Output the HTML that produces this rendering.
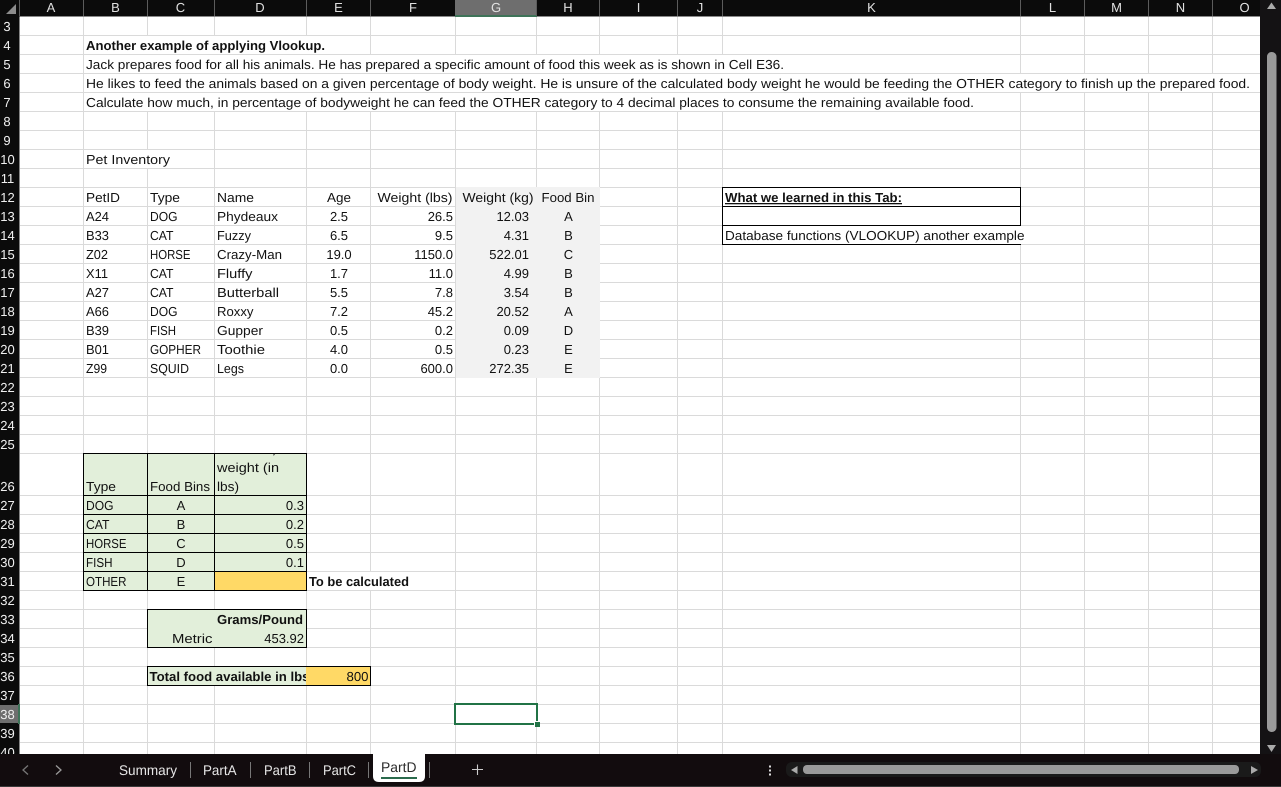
<!DOCTYPE html>
<html><head><meta charset="utf-8"><title>PartD</title>
<style>
html,body{margin:0;padding:0;background:#fff;width:1281px;height:787px;overflow:hidden}
svg{display:block;font-family:"Liberation Sans",sans-serif;font-size:13px;text-rendering:geometricPrecision}
.g line{stroke:#dadada;stroke-width:1}
.t text{fill:#111}
.b{font-weight:700}
.h text{fill:#e0e0e0;text-anchor:middle;font-size:13px}
.r text{fill:#f0f0f0;text-anchor:middle;font-size:13px}
.k line{stroke:#000;stroke-width:1}
.c{text-anchor:middle}
.e{text-anchor:end}
.tb text{fill:#e6e6e6;font-size:14px}
.tb line{stroke:#777;stroke-width:1}
</style></head><body>
<svg width="1281" height="787" viewBox="0 0 1281 787" xmlns="http://www.w3.org/2000/svg">
<rect width="1281" height="787" fill="#fff"/>
<g class="g">
<line x1="83.5" y1="16" x2="83.5" y2="754"/><line x1="147.5" y1="16" x2="147.5" y2="754"/><line x1="214.5" y1="16" x2="214.5" y2="754"/><line x1="306.5" y1="16" x2="306.5" y2="754"/><line x1="370.5" y1="16" x2="370.5" y2="754"/><line x1="455.5" y1="16" x2="455.5" y2="754"/><line x1="536.5" y1="16" x2="536.5" y2="754"/><line x1="599.5" y1="16" x2="599.5" y2="754"/><line x1="677.5" y1="16" x2="677.5" y2="754"/><line x1="722.5" y1="16" x2="722.5" y2="754"/><line x1="1020.5" y1="16" x2="1020.5" y2="754"/><line x1="1084.5" y1="16" x2="1084.5" y2="754"/><line x1="1148.5" y1="16" x2="1148.5" y2="754"/><line x1="1212.5" y1="16" x2="1212.5" y2="754"/>
<line x1="20" y1="35.5" x2="1260" y2="35.5"/><line x1="20" y1="54.5" x2="1260" y2="54.5"/><line x1="20" y1="73.5" x2="1260" y2="73.5"/><line x1="20" y1="92.5" x2="1260" y2="92.5"/><line x1="20" y1="111.5" x2="1260" y2="111.5"/><line x1="20" y1="130.5" x2="1260" y2="130.5"/><line x1="20" y1="149.5" x2="1260" y2="149.5"/><line x1="20" y1="168.5" x2="1260" y2="168.5"/><line x1="20" y1="187.5" x2="1260" y2="187.5"/><line x1="20" y1="206.5" x2="1260" y2="206.5"/><line x1="20" y1="225.5" x2="1260" y2="225.5"/><line x1="20" y1="244.5" x2="1260" y2="244.5"/><line x1="20" y1="263.5" x2="1260" y2="263.5"/><line x1="20" y1="282.5" x2="1260" y2="282.5"/><line x1="20" y1="301.5" x2="1260" y2="301.5"/><line x1="20" y1="320.5" x2="1260" y2="320.5"/><line x1="20" y1="339.5" x2="1260" y2="339.5"/><line x1="20" y1="358.5" x2="1260" y2="358.5"/><line x1="20" y1="377.5" x2="1260" y2="377.5"/><line x1="20" y1="396.5" x2="1260" y2="396.5"/><line x1="20" y1="415.5" x2="1260" y2="415.5"/><line x1="20" y1="434.5" x2="1260" y2="434.5"/><line x1="20" y1="453.5" x2="1260" y2="453.5"/><line x1="20" y1="495.5" x2="1260" y2="495.5"/><line x1="20" y1="514.5" x2="1260" y2="514.5"/><line x1="20" y1="533.5" x2="1260" y2="533.5"/><line x1="20" y1="552.5" x2="1260" y2="552.5"/><line x1="20" y1="571.5" x2="1260" y2="571.5"/><line x1="20" y1="590.5" x2="1260" y2="590.5"/><line x1="20" y1="609.5" x2="1260" y2="609.5"/><line x1="20" y1="628.5" x2="1260" y2="628.5"/><line x1="20" y1="647.5" x2="1260" y2="647.5"/><line x1="20" y1="666.5" x2="1260" y2="666.5"/><line x1="20" y1="685.5" x2="1260" y2="685.5"/><line x1="20" y1="704.5" x2="1260" y2="704.5"/><line x1="20" y1="723.5" x2="1260" y2="723.5"/><line x1="20" y1="742.5" x2="1260" y2="742.5"/>
</g>
<!-- overflow suppression -->
<g fill="#fff">
<rect x="84" y="36" width="286" height="18"/>
<rect x="84" y="55" width="936" height="18"/>
<rect x="84" y="74" width="1176" height="18"/>
<rect x="84" y="93" width="936" height="18"/>
<rect x="84" y="150" width="130" height="18"/>
<rect x="723" y="226" width="320" height="18"/>
<rect x="307" y="572" width="148" height="18"/>
</g>
<rect x="456" y="187" width="144" height="191" fill="#f2f2f2"/>
<!-- lookup fills -->
<rect x="84" y="454" width="222" height="136" fill="#e2efda"/>
<rect x="214" y="572" width="92" height="18" fill="#ffd966"/>
<rect x="148" y="610" width="158" height="37" fill="#e2efda"/>
<rect x="148" y="667" width="158" height="18" fill="#e2efda"/>
<rect x="306" y="667" width="64" height="18" fill="#ffd966"/>
<g class="k">
<line x1="83.5" y1="453" x2="83.5" y2="591"/><line x1="147.5" y1="453" x2="147.5" y2="591"/><line x1="214.5" y1="453" x2="214.5" y2="591"/><line x1="306.5" y1="453" x2="306.5" y2="591"/>
<line x1="83" y1="453.5" x2="307" y2="453.5"/><line x1="83" y1="495.5" x2="307" y2="495.5"/><line x1="83" y1="514.5" x2="307" y2="514.5"/><line x1="83" y1="533.5" x2="307" y2="533.5"/><line x1="83" y1="552.5" x2="307" y2="552.5"/><line x1="83" y1="571.5" x2="307" y2="571.5"/><line x1="83" y1="590.5" x2="307" y2="590.5"/>
<line x1="147.5" y1="609" x2="147.5" y2="648"/><line x1="306.5" y1="609" x2="306.5" y2="648"/><line x1="147" y1="609.5" x2="307" y2="609.5"/><line x1="147" y1="647.5" x2="307" y2="647.5"/>
<line x1="147.5" y1="666" x2="147.5" y2="686"/><line x1="370.5" y1="666" x2="370.5" y2="686"/><line x1="147" y1="666.5" x2="371" y2="666.5"/><line x1="147" y1="685.5" x2="371" y2="685.5"/>
<line x1="722.5" y1="187" x2="722.5" y2="245"/><line x1="1020.5" y1="187" x2="1020.5" y2="226"/><line x1="722" y1="187.5" x2="1021" y2="187.5"/><line x1="722" y1="206.5" x2="1021" y2="206.5"/><line x1="722" y1="225.5" x2="1021" y2="225.5"/><line x1="722" y1="244.5" x2="1021" y2="244.5"/>
</g>
<g class="t">
<text x="86" y="50" class="b" textLength="239" lengthAdjust="spacingAndGlyphs">Another example of applying Vlookup.</text>
<text x="86" y="69" textLength="698" lengthAdjust="spacingAndGlyphs">Jack prepares food for all his animals. He has prepared a specific amount of food this week as is shown in Cell E36.</text>
<text x="86" y="88" textLength="1164" lengthAdjust="spacingAndGlyphs">He likes to feed the animals based on a given percentage of body weight. He is unsure of the calculated body weight he would be feeding the OTHER category to finish up the prepared food.</text>
<text x="86" y="107" textLength="888" lengthAdjust="spacingAndGlyphs">Calculate how much, in percentage of bodyweight he can feed the OTHER category to 4 decimal places to consume the remaining available food.</text>
<text x="86" y="164" textLength="84" lengthAdjust="spacingAndGlyphs">Pet Inventory</text>

<text x="86" y="202" textLength="34" lengthAdjust="spacingAndGlyphs">PetID</text>
<text x="150" y="202" textLength="30" lengthAdjust="spacingAndGlyphs">Type</text>
<text x="217" y="202" textLength="37" lengthAdjust="spacingAndGlyphs">Name</text>
<text x="327" y="202" textLength="24" lengthAdjust="spacingAndGlyphs">Age</text>
<text x="377.5" y="202" textLength="75" lengthAdjust="spacingAndGlyphs">Weight (lbs)</text>
<text x="462.5" y="202" textLength="71" lengthAdjust="spacingAndGlyphs">Weight (kg)</text>
<text x="541.5" y="202" textLength="53" lengthAdjust="spacingAndGlyphs">Food Bin</text>

<text x="86" y="221" textLength="23" lengthAdjust="spacingAndGlyphs">A24</text><text x="150" y="221" textLength="27.5" lengthAdjust="spacingAndGlyphs">DOG</text><text x="217" y="221" textLength="61" lengthAdjust="spacingAndGlyphs">Phydeaux</text>
<text x="339" y="221" class="c">2.5</text><text x="453" y="221" class="e">26.5</text><text x="529" y="221" class="e">12.03</text><text x="568.5" y="221" class="c">A</text>

<text x="86" y="240" textLength="23" lengthAdjust="spacingAndGlyphs">B33</text><text x="150" y="240" textLength="23.5" lengthAdjust="spacingAndGlyphs">CAT</text><text x="217" y="240" textLength="34" lengthAdjust="spacingAndGlyphs">Fuzzy</text>
<text x="339" y="240" class="c">6.5</text><text x="453" y="240" class="e">9.5</text><text x="529" y="240" class="e">4.31</text><text x="568.5" y="240" class="c">B</text>

<text x="86" y="259" textLength="22" lengthAdjust="spacingAndGlyphs">Z02</text><text x="150" y="259" textLength="40.5" lengthAdjust="spacingAndGlyphs">HORSE</text><text x="217" y="259" textLength="65" lengthAdjust="spacingAndGlyphs">Crazy-Man</text>
<text x="339" y="259" class="c">19.0</text><text x="453" y="259" class="e">1150.0</text><text x="529" y="259" class="e">522.01</text><text x="568.5" y="259" class="c">C</text>

<text x="86" y="278" textLength="22" lengthAdjust="spacingAndGlyphs">X11</text><text x="150" y="278" textLength="23.5" lengthAdjust="spacingAndGlyphs">CAT</text><text x="217" y="278" textLength="35.5" lengthAdjust="spacingAndGlyphs">Fluffy</text>
<text x="339" y="278" class="c">1.7</text><text x="453" y="278" class="e">11.0</text><text x="529" y="278" class="e">4.99</text><text x="568.5" y="278" class="c">B</text>

<text x="86" y="297" textLength="23" lengthAdjust="spacingAndGlyphs">A27</text><text x="150" y="297" textLength="23.5" lengthAdjust="spacingAndGlyphs">CAT</text><text x="217" y="297" textLength="62" lengthAdjust="spacingAndGlyphs">Butterball</text>
<text x="339" y="297" class="c">5.5</text><text x="453" y="297" class="e">7.8</text><text x="529" y="297" class="e">3.54</text><text x="568.5" y="297" class="c">B</text>

<text x="86" y="316" textLength="23" lengthAdjust="spacingAndGlyphs">A66</text><text x="150" y="316" textLength="27.5" lengthAdjust="spacingAndGlyphs">DOG</text><text x="217" y="316" textLength="36.5" lengthAdjust="spacingAndGlyphs">Roxxy</text>
<text x="339" y="316" class="c">7.2</text><text x="453" y="316" class="e">45.2</text><text x="529" y="316" class="e">20.52</text><text x="568.5" y="316" class="c">A</text>

<text x="86" y="335" textLength="23" lengthAdjust="spacingAndGlyphs">B39</text><text x="150" y="335" textLength="26" lengthAdjust="spacingAndGlyphs">FISH</text><text x="217" y="335" textLength="46" lengthAdjust="spacingAndGlyphs">Gupper</text>
<text x="339" y="335" class="c">0.5</text><text x="453" y="335" class="e">0.2</text><text x="529" y="335" class="e">0.09</text><text x="568.5" y="335" class="c">D</text>

<text x="86" y="354" textLength="23" lengthAdjust="spacingAndGlyphs">B01</text><text x="150" y="354" textLength="51" lengthAdjust="spacingAndGlyphs">GOPHER</text><text x="217" y="354" textLength="48" lengthAdjust="spacingAndGlyphs">Toothie</text>
<text x="339" y="354" class="c">4.0</text><text x="453" y="354" class="e">0.5</text><text x="529" y="354" class="e">0.23</text><text x="568.5" y="354" class="c">E</text>

<text x="86" y="373" textLength="21" lengthAdjust="spacingAndGlyphs">Z99</text><text x="150" y="373" textLength="39" lengthAdjust="spacingAndGlyphs">SQUID</text><text x="217" y="373" textLength="27" lengthAdjust="spacingAndGlyphs">Legs</text>
<text x="339" y="373" class="c">0.0</text><text x="453" y="373" class="e">600.0</text><text x="529" y="373" class="e">272.35</text><text x="568.5" y="373" class="c">E</text>

<text x="725" y="202" class="b" textLength="177" lengthAdjust="spacingAndGlyphs" text-decoration="underline">What we learned in this Tab:</text>
<text x="725" y="240" textLength="299.5" lengthAdjust="spacingAndGlyphs">Database functions (VLOOKUP) another example</text>

<path d="M274.5 453.8l-1 1.6" stroke="#333" stroke-width="1" fill="none"/>
<text x="217" y="472" textLength="62" lengthAdjust="spacingAndGlyphs">weight (in</text>
<text x="86" y="491" textLength="30" lengthAdjust="spacingAndGlyphs">Type</text>
<text x="150" y="491" textLength="60" lengthAdjust="spacingAndGlyphs">Food Bins</text>
<text x="217" y="491" textLength="22" lengthAdjust="spacingAndGlyphs">lbs)</text>

<text x="86" y="510" textLength="27.5" lengthAdjust="spacingAndGlyphs">DOG</text><text x="181" y="510" class="c">A</text><text x="304" y="510" class="e">0.3</text>
<text x="86" y="529" textLength="23.5" lengthAdjust="spacingAndGlyphs">CAT</text><text x="181" y="529" class="c">B</text><text x="304" y="529" class="e">0.2</text>
<text x="86" y="548" textLength="40.5" lengthAdjust="spacingAndGlyphs">HORSE</text><text x="181" y="548" class="c">C</text><text x="304" y="548" class="e">0.5</text>
<text x="86" y="567" textLength="26.5" lengthAdjust="spacingAndGlyphs">FISH</text><text x="181" y="567" class="c">D</text><text x="304" y="567" class="e">0.1</text>
<text x="86" y="586" textLength="40.5" lengthAdjust="spacingAndGlyphs">OTHER</text><text x="181" y="586" class="c">E</text>
<text x="309" y="586" class="b" textLength="100" lengthAdjust="spacingAndGlyphs">To be calculated</text>

<text x="217" y="624" class="b" textLength="86" lengthAdjust="spacingAndGlyphs">Grams/Pound</text>
<text x="172" y="643" textLength="40.5" lengthAdjust="spacingAndGlyphs">Metric</text>
<text x="304" y="643" class="e">453.92</text>
<text x="149.5" y="681" class="b" textLength="160" lengthAdjust="spacingAndGlyphs">Total food available in lbs</text>
</g>
<rect x="306" y="667" width="64" height="18" fill="#ffd966"/>
<line x1="306" y1="666.5" x2="371" y2="666.5" stroke="#000"/>
<line x1="306" y1="685.5" x2="371" y2="685.5" stroke="#000"/>
<line x1="370.5" y1="666" x2="370.5" y2="686" stroke="#000"/>
<text x="368.5" y="681" class="e" fill="#111" textLength="22" lengthAdjust="spacingAndGlyphs">800</text>

<!-- selection -->
<rect x="455" y="704" width="82" height="20" fill="none" stroke="#217346" stroke-width="2"/>
<rect x="534" y="721" width="6" height="6" fill="#fff"/>
<rect x="535" y="722" width="5" height="5" fill="#217346"/>

<!-- col headers -->
<rect x="0" y="0" width="1281" height="16" fill="#0b0b0b"/>
<rect x="0" y="16" width="1260" height="1" fill="#8a8a8a"/>
<rect x="455" y="0" width="82" height="16" fill="#6e6e6e"/>
<rect x="455" y="15" width="82" height="2" fill="#3e7358"/>
<g fill="#5c5c5c">
<rect x="19" y="0" width="1" height="16"/><rect x="83" y="0" width="1" height="16"/><rect x="147" y="0" width="1" height="16"/><rect x="214" y="0" width="1" height="16"/><rect x="306" y="0" width="1" height="16"/><rect x="370" y="0" width="1" height="16"/><rect x="536" y="0" width="1" height="16"/><rect x="599" y="0" width="1" height="16"/><rect x="677" y="0" width="1" height="16"/><rect x="722" y="0" width="1" height="16"/><rect x="1020" y="0" width="1" height="16"/><rect x="1084" y="0" width="1" height="16"/><rect x="1148" y="0" width="1" height="16"/><rect x="1212" y="0" width="1" height="16"/>
</g>
<polygon points="16,4 16,14 6,14" fill="#8c8c8c"/>
<g class="h">
<text x="51" y="12">A</text><text x="115.5" y="12">B</text><text x="180.5" y="12">C</text><text x="260" y="12">D</text><text x="338.5" y="12">E</text><text x="413" y="12">F</text><text x="496" y="12">G</text><text x="568" y="12">H</text><text x="638.5" y="12">I</text><text x="700" y="12">J</text><text x="871.5" y="12">K</text><text x="1052.5" y="12">L</text><text x="1116.5" y="12">M</text><text x="1180.5" y="12">N</text><text x="1244.5" y="12">O</text>
</g>

<!-- row headers -->
<rect x="0" y="16" width="19.5" height="738" fill="#0b0b0b"/>
<rect x="0" y="705" width="18" height="18" fill="#6e6e6e"/>
<rect x="18" y="704" width="2" height="20" fill="#3e7358"/>
<g class="r">
<text x="7" y="31">3</text><text x="7" y="50">4</text><text x="7" y="69">5</text><text x="7" y="88">6</text><text x="7" y="107">7</text><text x="7" y="126">8</text><text x="7" y="145">9</text><text x="7.5" y="164">10</text><text x="7.5" y="183">11</text><text x="7.5" y="202">12</text><text x="7.5" y="221">13</text><text x="7.5" y="240">14</text><text x="7.5" y="259">15</text><text x="7.5" y="278">16</text><text x="7.5" y="297">17</text><text x="7.5" y="316">18</text><text x="7.5" y="335">19</text><text x="7.5" y="354">20</text><text x="7.5" y="373">21</text><text x="7.5" y="392">22</text><text x="7.5" y="411">23</text><text x="7.5" y="430">24</text><text x="7.5" y="449">25</text><text x="7.5" y="491">26</text><text x="7.5" y="510">27</text><text x="7.5" y="529">28</text><text x="7.5" y="548">29</text><text x="7.5" y="567">30</text><text x="7.5" y="586">31</text><text x="7.5" y="605">32</text><text x="7.5" y="624">33</text><text x="7.5" y="643">34</text><text x="7.5" y="662">35</text><text x="7.5" y="681">36</text><text x="7.5" y="700">37</text><text x="7.5" y="719">38</text><text x="7.5" y="738">39</text><text x="7.5" y="757">40</text>
</g>

<!-- right scrollbar -->
<rect x="1260" y="0" width="21" height="787" fill="#141214"/>
<polygon points="1271.5,2.5 1276,9 1267,9" fill="#aaa"/>
<rect x="1267" y="52" width="9.5" height="680" rx="4.5" fill="#9a9a9a"/>
<polygon points="1267,745 1276,745 1271.5,752" fill="#aaa"/>

<!-- tab bar -->
<rect x="0" y="754" width="1281" height="33" fill="#120c0e"/>
<rect x="0" y="786" width="1281" height="1" fill="#3a3a3a"/>
<path d="M28 765.5l-5 4.5 5 4.5" stroke="#777" stroke-width="1.3" fill="none"/>
<path d="M56 765.5l5 4.5-5 4.5" stroke="#999" stroke-width="1.3" fill="none"/>
<path d="M373 754h52v22q0 6-6 6h-40q-6 0-6-6z" fill="#fff"/>
<g class="tb">
<text x="119" y="775" textLength="58" lengthAdjust="spacingAndGlyphs">Summary</text>
<text x="203" y="775" textLength="33.5" lengthAdjust="spacingAndGlyphs">PartA</text>
<text x="264" y="775" textLength="32.5" lengthAdjust="spacingAndGlyphs">PartB</text>
<text x="323" y="775" textLength="33" lengthAdjust="spacingAndGlyphs">PartC</text>
<line x1="190.5" y1="762" x2="190.5" y2="778"/><line x1="250.5" y1="762" x2="250.5" y2="778"/><line x1="309.5" y1="762" x2="309.5" y2="778"/><line x1="368.5" y1="762" x2="368.5" y2="778"/><line x1="429.5" y1="762" x2="429.5" y2="778"/>
</g>
<text x="381" y="772" fill="#2b2b2b" font-size="14" textLength="35.5" lengthAdjust="spacingAndGlyphs">PartD</text>
<rect x="381" y="777" width="36" height="2" fill="#2a6a4c"/>
<path d="M472 769.5h11M477.5 764.5v10.5" stroke="#ccc" stroke-width="1.1" fill="none"/>
<rect x="769" y="765.5" width="2" height="2" fill="#ddd"/><rect x="769" y="769.5" width="2" height="2" fill="#ddd"/><rect x="769" y="773.5" width="2" height="2" fill="#ddd"/>
<rect x="786" y="762" width="475" height="15" rx="6" fill="#1a1a1a"/>
<polygon points="797.5,766 797.5,774 791,770" fill="#aaa"/>
<rect x="803" y="765" width="436" height="9" rx="4" fill="#9a9a9a"/>
<polygon points="1251,766 1251,774 1258,770" fill="#aaa"/>
</svg>
</body></html>
